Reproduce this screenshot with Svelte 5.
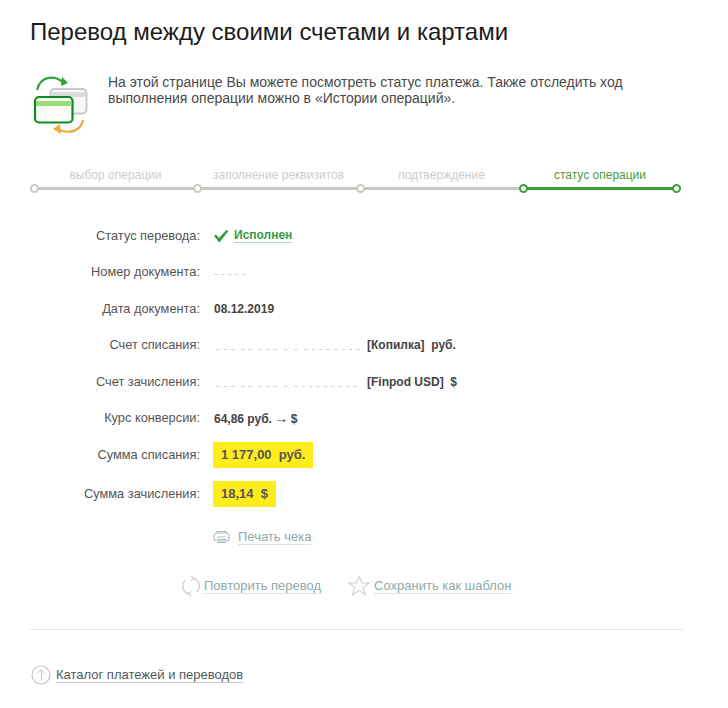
<script>
    const steps = [
        { name: "выбор операции", active: false },
        { name: "заполнение реквизитов", active: false },
        { name: "подтверждение", active: false },
        { name: "статус операции", active: true }
    ];
</script>

<main class="page">
    <h1>Перевод между своими счетами и картами</h1>

    <div class="intro">
        <svg class="intro-icon" width="60" height="66" viewBox="0 0 60 66" fill="none">
            <path d="M7 18C10 5 23 2 33 10" stroke="#2fa23a" stroke-width="2.2"/>
            <path d="M32 5L38 11L31 14Z" fill="#2fa23a"/>
            <path d="M53 48C51 59 40 62 29 58" stroke="#f2a93b" stroke-width="2.2"/>
            <path d="M30 52L23 57L31 62Z" fill="#f2a93b"/>
            <rect x="20.5" y="17" width="36" height="24.5" rx="4" fill="#f8f8f8" stroke="#c9c9c9" stroke-width="2"/>
            <rect x="21.5" y="20" width="34" height="5" fill="#dcdcdc"/>
            <rect x="5" y="25" width="37.5" height="25.5" rx="4" fill="#fbfdf6" stroke="#108a22" stroke-width="2.2"/>
            <rect x="6" y="29" width="35.5" height="5" fill="#9bdc7c"/>
        </svg>
        <p>На этой странице Вы можете посмотреть статус платежа. Также отследить ход выполнения операции можно в «Истории операций».</p>
    </div>

    <div class="steps">
        {#each steps as step}
            <div class="step" class:active={step.active}>
                <span class="step-name">{step.name}</span>
                <div class="track"></div>
            </div>
        {/each}
    </div>

    <div class="details">
        <div class="row">
            <span class="label">Статус перевода:</span>
            <span class="value status">
                <svg width="16" height="14" viewBox="0 0 16 14"><path d="M1 7L3 5.5L6 9L13.5 1L15.5 2L6.3 13.5Z" fill="#2f9e3c"/></svg>
                <span class="status-text">Исполнен</span>
            </span>
        </div>
        <div class="row">
            <span class="label">Номер документа:</span>
            <span class="value masked">_ _ _ _ _ .</span>
        </div>
        <div class="row">
            <span class="label">Дата документа:</span>
            <span class="value">08.12.2019</span>
        </div>
        <div class="row">
            <span class="label">Счет списания:</span>
            <span class="value"><span class="masked account">_ _ _  _ _  _ _ _  _  _  _ _ _ _ _ _ _ _</span>[Копилка]&nbsp; руб.</span>
        </div>
        <div class="row">
            <span class="label">Счет зачисления:</span>
            <span class="value"><span class="masked account">_ _ _  _ _  _ _ _  _  _ _ _ _ _ _ _ _ _</span>[Finpod USD]&nbsp; $</span>
        </div>
        <div class="row">
            <span class="label">Курс конверсии:</span>
            <span class="value">64,86 руб. <span class="arrow">→</span> $</span>
        </div>
        <div class="row">
            <span class="label">Сумма списания:</span>
            <span class="value mark">1 177,00&nbsp; руб.</span>
        </div>
        <div class="row last">
            <span class="label">Сумма зачисления:</span>
            <span class="value mark">18,14&nbsp; $</span>
        </div>
    </div>

    <div class="print">
        <svg width="17" height="14" viewBox="0 0 17 14" fill="none" stroke="#a9c2c0" stroke-width="1.2">
            <path d="M4 3V1.5H13V3"/>
            <rect x="1" y="3" width="15" height="8" rx="3"/>
            <path d="M4 7H13M4 9.5H13M4 12.5H13"/>
        </svg>
        <span class="link">Печать чека</span>
    </div>

    <div class="actions">
        <div class="action">
            <svg width="20" height="22" viewBox="0 0 20 22" fill="none" stroke="#d2d2d2" stroke-width="1.5">
                <path d="M12 3.2A8 8 0 0 1 15.5 17"/>
                <path d="M8 18.8A8 8 0 0 1 4.5 5"/>
                <path d="M9.5 1L13 3.2L9.8 5.5" stroke-width="1.2"/>
                <path d="M10.5 16.5L7 18.8L10.2 21" stroke-width="1.2"/>
            </svg>
            <span class="link">Повторить перевод</span>
        </div>
        <div class="action">
            <svg width="22" height="21" viewBox="0 0 22 21" fill="none" stroke="#d2d2d2" stroke-width="1.1">
                <path d="M11 1.2L13.8 8H21L15.2 12.4L17.4 19.8L11 15.4L4.6 19.8L6.8 12.4L1 8H8.2Z"/>
            </svg>
            <span class="link">Сохранить как шаблон</span>
        </div>
    </div>

    <div class="catalog">
        <svg width="20" height="20" viewBox="0 0 20 20" fill="none" stroke="#c4c4c4" stroke-width="1.2">
            <circle cx="10" cy="10" r="9"/>
            <path d="M10.5 15.5V6C10.5 5 10 4.8 9 5.5L6.5 8M10.5 5.5L13 8" stroke-width="1"/>
        </svg>
        <span class="catalog-link">Каталог платежей и переводов</span>
    </div>
</main>

<style>
    :global(body) {
        background: #fff;
    }
    .page {
        width: 653px;
        padding: 18px 0 0 30px;
        font-family: "Liberation Sans", Arial, sans-serif;
        color: #4a4a4a;
    }
    h1 {
        margin: 0;
        font-size: 24px;
        font-weight: 400;
        line-height: 27px;
        color: #1c1c1c;
    }
    .intro {
        display: flex;
        margin-top: 27px;
        height: 70px;
    }
    .intro-icon {
        flex: none;
    }
    .intro p {
        margin: 2px 0 0 18px;
        width: 540px;
        font-size: 14px;
        line-height: 16px;
    }
    .steps {
        display: flex;
        margin: 26px 0 0 4px;
        width: 643px;
    }
    .step {
        flex: none;
        width: 163px;
        text-align: center;
    }
    .step:last-child {
        width: 154px;
    }
    .step-name {
        display: block;
        font-size: 12px;
        line-height: 14px;
        color: #cdcdcd;
    }
    .track {
        position: relative;
        height: 3px;
        margin-top: 5px;
        background: #c8c8c8;
    }
    .track::before,
    .step:last-child .track::after {
        content: "";
        position: absolute;
        top: -3px;
        left: -4px;
        box-sizing: border-box;
        width: 9px;
        height: 9px;
        border: 2px solid #c9c9c0;
        border-radius: 50%;
        background: #fff;
    }
    .step:last-child .track::after {
        left: auto;
        right: -4px;
    }
    .active .step-name {
        color: #4f9a3c;
    }
    .active .track {
        background: #3f9e36;
    }
    .active .track::before,
    .step.active:last-child .track::after {
        border-color: #3f9e36;
    }
    .details {
        margin-top: 27.4px;
        font-size: 12px;
    }
    .row {
        display: flex;
        align-items: center;
        gap: 14px;
        height: 36.5px;
    }
    .row.last {
        margin-top: 2.5px;
    }
    .label {
        flex: none;
        width: 170px;
        text-align: right;
        font-size: 12.8px;
        line-height: 14px;
        color: #555;
    }
    .value {
        font-weight: 700;
        color: #444;
    }
    .status {
        display: flex;
        align-items: center;
        gap: 5px;
        margin-left: -1px;
    }
    .status-text {
        color: #3b9a45;
        border-bottom: 1px solid #b5dab9;
        line-height: 14px;
    }
    .masked {
        font-weight: 400;
        font-size: 6px;
        letter-spacing: 1px;
        color: #888;
        white-space: pre;
    }
    .account {
        display: inline-block;
        width: 144px;
        margin-right: 7px;
        padding-left: 2px;
        letter-spacing: 1.2px;
    }
    .arrow {
        margin: 0 -1px;
        font-size: 14px;
        font-weight: 400;
        line-height: 1;
    }
    .mark {
        margin-left: -1px;
        padding: 0 8px;
        font-size: 13px;
        line-height: 26px;
        color: #555;
        background: #ffec1c;
    }
    .print {
        display: flex;
        align-items: center;
        gap: 8px;
        margin: 17px 0 0 183px;
    }
    .link {
        font-size: 13px;
        line-height: 15px;
        color: #91a9aa;
        border-bottom: 1px solid #dde5e5;
    }
    .actions {
        display: flex;
        gap: 27px;
        margin: 30px 0 0 151px;
    }
    .action {
        display: flex;
        align-items: center;
        gap: 3px;
    }
    .action + .action {
        gap: 4px;
    }
    .catalog {
        display: flex;
        align-items: center;
        gap: 5px;
        margin-top: 32px;
        padding: 35px 0 0 1px;
        border-top: 1px solid #e5e5e5;
    }
    .catalog-link {
        font-size: 13px;
        line-height: 15px;
        color: #505a60;
        border-bottom: 1px solid #c9c9c9;
    }
</style>
